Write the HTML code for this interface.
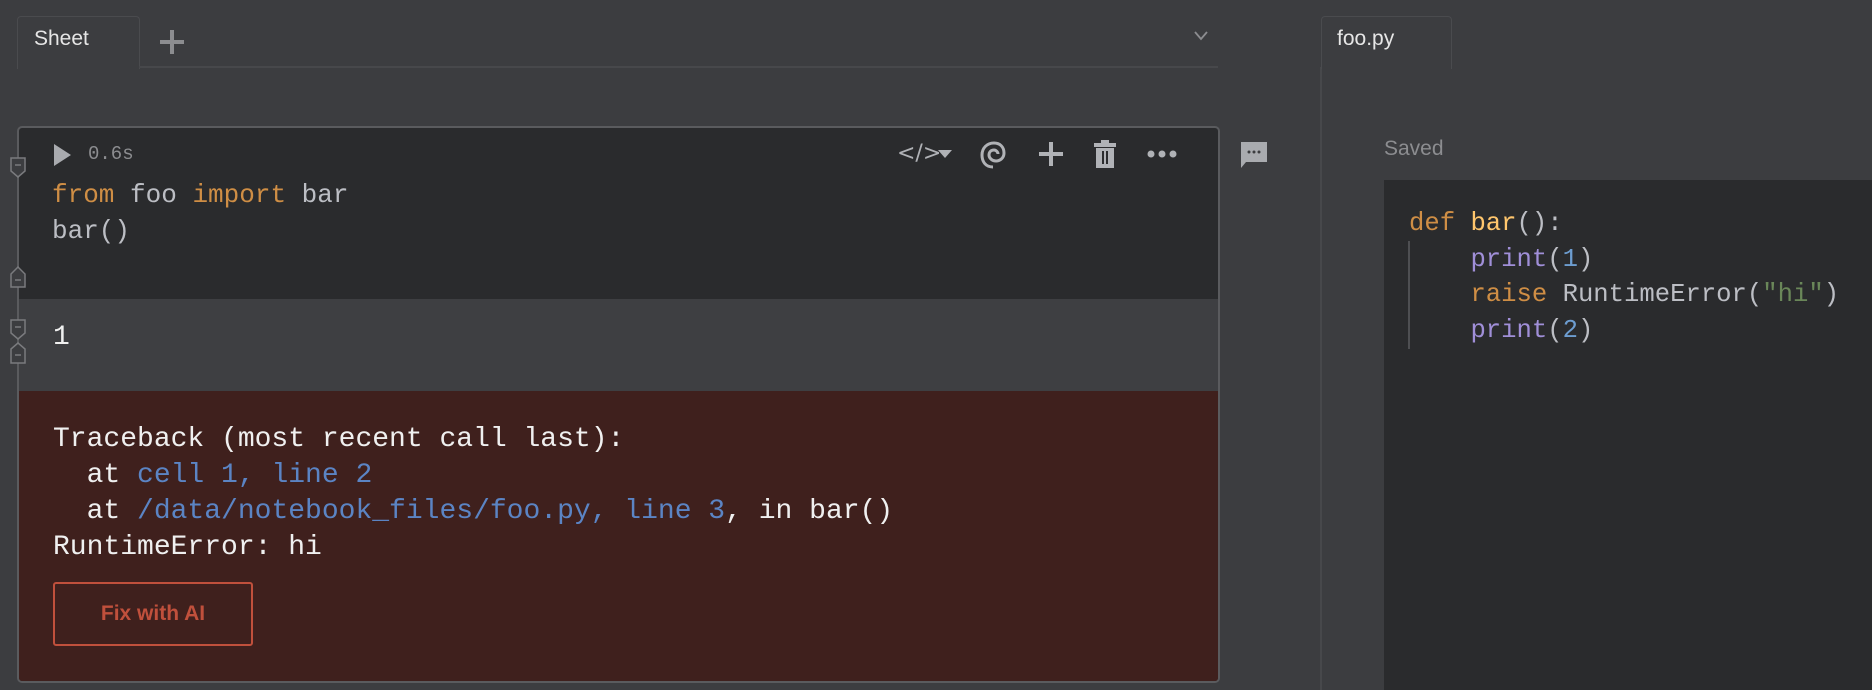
<!DOCTYPE html>
<html><head><style>
body{margin:0;width:1872px;height:690px;background:#3c3d40;position:relative;overflow:hidden;font-family:"Liberation Sans",sans-serif}
.a{position:absolute}
.mono{font-family:"Liberation Mono","DejaVu Sans Mono",monospace}
.k{color:#cf8e45}.t{color:#bcbec4}.l{color:#5b84c4}.p{color:#a08fd8}.n{color:#6d9dd0}.s{color:#6a8759}.y{color:#ffc66d}
</style></head><body>
<div class="a" style="left:17px;top:16px;width:121px;height:52px;border:1px solid #4a4b4e;border-bottom:none;border-radius:4px 4px 0 0;background:#3c3d40"></div>
<div class="a" style="left:34px;top:27px;font-size:21px;color:#e6e6e6">Sheet</div>
<div class="a" style="left:160px;top:40px;width:24px;height:4px;background:#8c8d90"></div>
<div class="a" style="left:170px;top:30px;width:4px;height:24px;background:#8c8d90"></div>
<div class="a" style="left:139px;top:66px;width:1079px;height:2px;background:#47484b"></div>
<svg class="a" style="left:1194px;top:31px" width="14" height="10"><path d="M1 1L7 8L13 1" stroke="#8c8d90" stroke-width="1.8" fill="none"/></svg>
<div class="a" style="left:17px;top:126px;width:1199px;height:553px;border:2px solid #5a5b5e;border-radius:5px;background:#2a2b2d;overflow:hidden">
 <div class="a" style="left:0;top:171px;width:100%;height:92px;background:#3e3f42"></div>
 <div class="a" style="left:0;top:263px;width:100%;height:290px;background:#3f201d"></div>
</div>
<svg class="a" style="left:53px;top:143px" width="20" height="24"><path d="M1 1L18 12L1 23Z" fill="#a9abaf"/></svg>
<div class="a mono" style="left:88px;top:143px;font-size:19px;color:#8c8d90">0.6s</div>
<div class="a mono" style="left:52px;top:177px;font-size:26px;line-height:36px;white-space:pre"><span class="k">from</span><span class="t"> foo </span><span class="k">import</span><span class="t"> bar
bar()</span></div>
<div class="a" style="left:897px;top:141px;font-size:22px;color:#b0b2b6;font-family:'DejaVu Sans',sans-serif">&lt;/&gt;</div>
<svg class="a" style="left:938px;top:150px" width="14" height="9"><path d="M0 0H14L7 8Z" fill="#b0b2b6"/></svg>
<svg class="a" style="left:979px;top:140px" width="28" height="30"><path d="M14 27C6 27 3 21 3 15C3 8 8 3 15 3C21 3 25 7 25 13C25 18 21 21 17 21C13 21 10 18 10 15C10 12 12 10 15 10C17 10 19 12 19 14" stroke="#b0b2b6" stroke-width="3" fill="none"/></svg>
<div class="a" style="left:1039px;top:152px;width:24px;height:4px;background:#b0b2b6"></div>
<div class="a" style="left:1049px;top:142px;width:4px;height:24px;background:#b0b2b6"></div>
<svg class="a" style="left:1094px;top:140px" width="22" height="28"><rect x="0" y="3" width="22" height="4" fill="#b0b2b6"/><rect x="7" y="0" width="8" height="4" fill="#b0b2b6"/><rect x="2" y="8" width="18" height="20" fill="#b0b2b6"/><rect x="8" y="11" width="2" height="13" fill="#2a2b2d"/><rect x="12" y="11" width="2" height="13" fill="#2a2b2d"/></svg>
<svg class="a" style="left:1147px;top:150px" width="30" height="8"><circle cx="4" cy="4" r="3.5" fill="#b0b2b6"/><circle cx="15" cy="4" r="3.5" fill="#b0b2b6"/><circle cx="26" cy="4" r="3.5" fill="#b0b2b6"/></svg>
<svg class="a" style="left:1240px;top:141px" width="28" height="28"><path d="M1 1H27V21H6L1 27Z" fill="#a9abaf"/><circle cx="9" cy="11" r="1.5" fill="#3c3d40"/><circle cx="14" cy="11" r="1.5" fill="#3c3d40"/><circle cx="19" cy="11" r="1.5" fill="#3c3d40"/></svg>
<svg class="a" style="left:8px;top:155px" width="20" height="240" fill="#3c3d40" stroke="#7a7b7e" stroke-width="1.5">
<path d="M3 3H17V16L10 22L3 16Z"/><path d="M7 10H13"/>
<path d="M3 119L10 112L17 119V132H3Z"/><path d="M7 125H13"/>
<path d="M3 165H17V178L10 184L3 178Z"/><path d="M7 172H13"/>
<path d="M3 194L10 188L17 194V208H3Z"/><path d="M7 200H13"/>
</svg>
<div class="a mono" style="left:53px;top:322px;font-size:28px;color:#f0f0f0">1</div>
<div class="a mono" style="left:53px;top:422px;font-size:28px;line-height:36px;white-space:pre;color:#f0f0f0">Traceback (most recent call last):
  at <span class="l">cell 1, line 2</span>
  at <span class="l">/data/notebook_files/foo.py, line 3</span>, in bar()
RuntimeError: hi</div>
<div class="a" style="left:53px;top:582px;width:196px;height:60px;border:2px solid #c0503c;border-radius:3px;color:#c0503c;font-size:21px;font-weight:bold;display:flex;align-items:center;justify-content:center">Fix with AI</div>
<div class="a" style="left:1320px;top:67px;width:2px;height:623px;background:#47484b"></div>
<div class="a" style="left:1321px;top:16px;width:129px;height:52px;border:1px solid #4a4b4e;border-bottom:none;border-radius:4px 4px 0 0;background:#3c3d40"></div>
<div class="a" style="left:1337px;top:27px;font-size:21px;color:#e6e6e6">foo.py</div>
<div class="a" style="left:1384px;top:137px;font-size:21px;color:#8c8d90">Saved</div>
<div class="a" style="left:1384px;top:180px;width:488px;height:510px;background:#2a2b2d"></div>
<div class="a" style="left:1408px;top:241px;width:2px;height:108px;background:#4e4f52"></div>
<div class="a mono" style="left:1409px;top:206px;font-size:25.6px;line-height:35.5px;white-space:pre"><span class="k">def</span> <span class="y">bar</span><span class="t">():</span>
    <span class="p">print</span><span class="t">(</span><span class="n">1</span><span class="t">)</span>
    <span class="k">raise</span><span class="t"> RuntimeError(</span><span class="s">"hi"</span><span class="t">)</span>
    <span class="p">print</span><span class="t">(</span><span class="n">2</span><span class="t">)</span></div>
</body></html>
